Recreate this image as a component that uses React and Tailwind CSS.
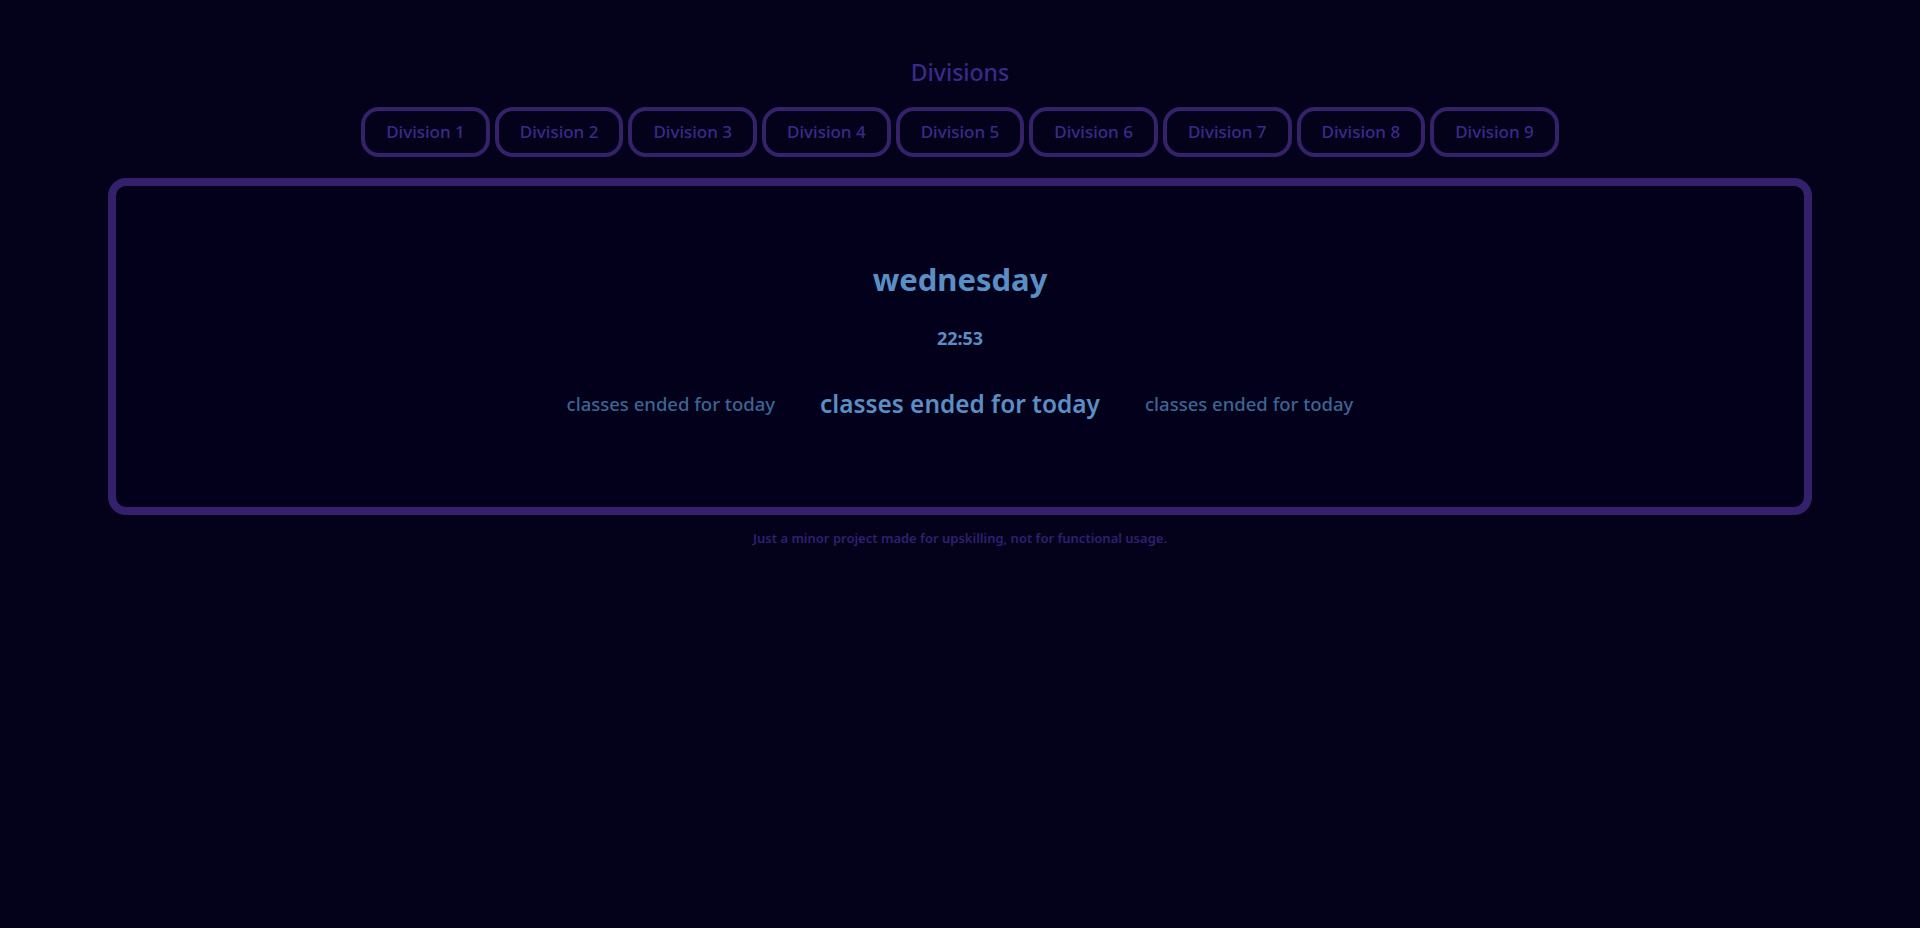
import { useState } from "react"

const divisions = [1, 2, 3, 4, 5, 6, 7, 8, 9]

const App = () => {
  const [active, setActive] = useState(0)

  return (
    <div
      className="min-h-screen bg-[#04011b] pt-[56px]"
      style={{ fontFamily: '"Noto Sans", sans-serif' }}
    >
      {/* Division picker */}
      <h2 className="text-center text-[23px] font-medium leading-[32px] text-[#3a2a8a]">
        Divisions
      </h2>
      <div className="mt-[19px] flex justify-center gap-[5px]">
        {divisions.map((d, i) => (
          <button
            key={d}
            onClick={() => setActive(i)}
            className="h-[50px] rounded-[18px] border-4 border-[#35226b] px-[21px] text-[17px] font-medium text-[#3b2a8a]"
          >
            Division {d}
          </button>
        ))}
      </div>

      {/* Schedule card */}
      <div className="mx-[108px] mt-[21px] flex h-[337px] flex-col items-center rounded-[18px] border-[8px] border-[#35216b] bg-[#02001a] pt-[71px]">
        <h1 className="text-[31px] font-bold leading-[44px] text-[#5a8fc5]">wednesday</h1>
        <p className="mt-[25px] text-[18px] font-bold leading-[24px] text-[#5a8fc5]">22:53</p>
        <div className="mt-[36px] flex items-center gap-[45px]">
          <span className="text-[18.5px] font-medium text-[#3d6592]">classes ended for today</span>
          <span className="text-[24.4px] font-semibold text-[#5a8fc5]">classes ended for today</span>
          <span className="text-[18.5px] font-medium text-[#3d6592]">classes ended for today</span>
        </div>
      </div>

      <p className="mt-[14px] text-center text-[13px] font-semibold text-[#2f2070]">
        Just a minor project made for upskilling, not for functional usage.
      </p>
    </div>
  )
}

export default App
